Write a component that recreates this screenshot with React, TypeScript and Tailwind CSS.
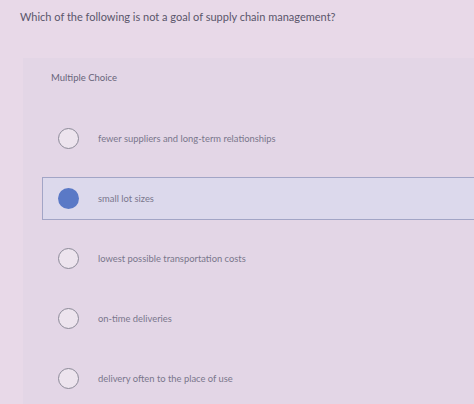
const options = [
  "fewer suppliers and long-term relationships",
  "small lot sizes",
  "lowest possible transportation costs",
  "on-time deliveries",
  "delivery often to the place of use",
];

const selected = 1;

export default function App() {
  return (
    <div className="w-[474px] h-[404px] overflow-hidden bg-[#e8d9e8] font-['Lato',sans-serif]">
      <h1 className="pl-5 pt-[10px] text-[11px] leading-[14px] text-[#5a566b]">
        Which of the following is not a goal of supply chain management?
      </h1>

      <div className="mt-[34px] ml-[23px] w-[470px] bg-[#e3d6e6] pt-[14px] pb-10">
        <p className="pl-[28px] text-[9.5px] leading-[12px] text-[#68647a]">Multiple Choice</p>

        <div className="mt-[33px] ml-[19px] flex flex-col gap-[17px]">
          {options.map((opt, i) => {
            const isSel = i === selected;
            return (
              <div
                key={opt}
                className={`flex h-[43px] items-center border pl-[15px] ${
                  isSel ? "border-[#a2a5c6] bg-[#dcd9ec]" : "border-transparent"
                }`}
              >
                {isSel ? (
                  <span className="h-[21px] w-[21px] shrink-0 rounded-full bg-[#5a79c6]" />
                ) : (
                  <span className="h-[21px] w-[21px] shrink-0 rounded-full border-[1.5px] border-[#8c8a98] bg-[#ede4ee]" />
                )}
                <span className="ml-[19px] text-[9.4px] leading-[12px] text-[#7a778c]">{opt}</span>
              </div>
            );
          })}
        </div>
      </div>
    </div>
  );
}
